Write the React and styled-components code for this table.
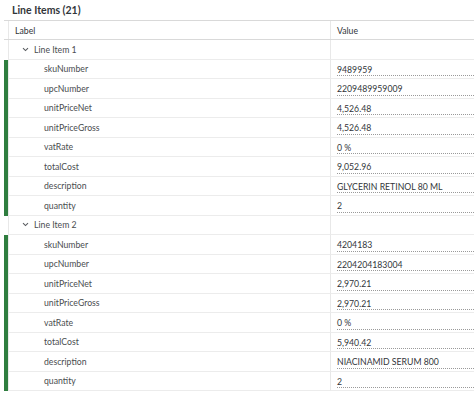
import React from "react";
import styled, { createGlobalStyle } from "styled-components";

const GlobalStyle = createGlobalStyle`
  html, body {
    margin: 0;
    padding: 0;
    background: #ffffff;
    overflow: hidden;
  }
  body {
    font-family: Lato, "Liberation Sans", Arial, sans-serif;
    color: #32363a;
  }
`;

const Page = styled.div`
  width: 474px;
  height: 395px;
  overflow: hidden;
  background: #fff;
  padding-left: 4px;
  box-sizing: border-box;
`;

const Title = styled.div`
  height: 20px;
  display: flex;
  align-items: center;
  padding-left: 8px;
  font-size: 10.5px;
  font-weight: 700;
  color: #32363a;
`;

const Table = styled.div`
  width: 520px;
`;

const Row = styled.div`
  display: grid;
  grid-template-columns: 4px 322px 1fr;
  height: 19.5px;
  box-sizing: border-box;
`;

const HeaderRow = styled(Row)`
  height: 20px;
  border-top: 1px solid #d9d9d9;
  border-bottom: 1px solid #d9d9d9;
`;

const Indicator = styled.div`
  background: ${(p) => (p.$on ? "#2f7d3f" : "transparent")};
`;

const Cell = styled.div`
  display: flex;
  align-items: center;
  border-left: 1px solid #e8e8e8;
  border-bottom: 1px solid #ececec;
  padding-left: 6px;
  font-size: 8.7px;
  color: #4a4d50;
  white-space: nowrap;
  overflow: hidden;
`;

const GroupCell = styled(Cell)`
  padding-left: 13px;
`;

const FieldCell = styled(Cell)`
  padding-left: 35px;
`;

const HeadCell = styled.div`
  display: flex;
  align-items: center;
  border-left: 1px solid #e8e8e8;
  padding-left: 6px;
  font-size: 8.7px;
  color: #32363a;
`;

const Chevron = styled.span`
  display: inline-flex;
  width: 12px;
  color: #5a5d60;
`;

const Value = styled.div`
  flex: 1;
  height: 12px;
  display: flex;
  align-items: center;
  margin-top: 2px;
  border-bottom: 1px dotted #9a9a9a;
  font-size: 8.7px;
  color: #32363a;
`;

const items = [
  {
    name: "Line Item 1",
    fields: [
      ["skuNumber", "9489959"],
      ["upcNumber", "2209489959009"],
      ["unitPriceNet", "4,526.48"],
      ["unitPriceGross", "4,526.48"],
      ["vatRate", "0 %"],
      ["totalCost", "9,052.96"],
      ["description", "GLYCERIN RETINOL 80 ML"],
      ["quantity", "2"],
    ],
  },
  {
    name: "Line Item 2",
    fields: [
      ["skuNumber", "4204183"],
      ["upcNumber", "2204204183004"],
      ["unitPriceNet", "2,970.21"],
      ["unitPriceGross", "2,970.21"],
      ["vatRate", "0 %"],
      ["totalCost", "5,940.42"],
      ["description", "NIACINAMID SERUM 800"],
      ["quantity", "2"],
    ],
  },
];

const ChevronIcon = () => (
  <svg width="7" height="5" viewBox="0 0 7 5">
    <path d="M1 1.2 L3.5 3.6 L6 1.2" fill="none" stroke="#5a5d60" strokeWidth="1.1" />
  </svg>
);

export default function App() {
  return (
    <Page>
      <GlobalStyle />
      <Title>Line Items (21)</Title>
      <Table>
        <HeaderRow>
          <Indicator />
          <HeadCell>Label</HeadCell>
          <HeadCell>Value</HeadCell>
        </HeaderRow>
        {items.map((item) => (
          <React.Fragment key={item.name}>
            <Row>
              <Indicator />
              <GroupCell>
                <Chevron>
                  <ChevronIcon />
                </Chevron>
                {item.name}
              </GroupCell>
              <Cell />
            </Row>
            {item.fields.map(([label, value]) => (
              <Row key={label}>
                <Indicator $on />
                <FieldCell>{label}</FieldCell>
                <Cell>
                  <Value>{value}</Value>
                </Cell>
              </Row>
            ))}
          </React.Fragment>
        ))}
      </Table>
    </Page>
  );
}
